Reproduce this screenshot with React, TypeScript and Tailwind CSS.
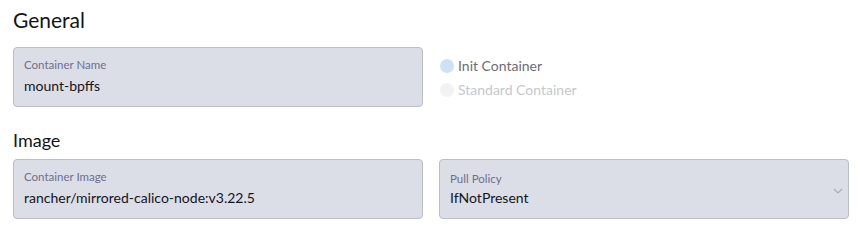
import React from "react";

const Field = ({ label, value, select }: { label: string; value: string; select?: boolean }) => (
  <div className={`relative h-[60px] rounded-[4px] border border-[#babdcc] bg-[#dcdee7] px-[10px] ${select ? "pt-[12px]" : "pt-[10px]"}`}>
    <div className="text-[11.5px] leading-[14px] text-[#6c6f8f]">{label}</div>
    <div className={`${select ? "mt-[3px]" : "mt-[5px]"} text-[14px] leading-[18px] text-[#141419]`}>{value}</div>
    {select && (
      <svg className="absolute right-[5px] top-[28px] h-[6px] w-[10px]" viewBox="0 0 10 6" fill="none" stroke="#a9abbd" strokeWidth="1.2">
        <path d="M1 1l4 4 4-4" />
      </svg>
    )}
  </div>
);

export default function App() {
  return (
    <div className="h-[237px] w-[858px] bg-white pl-[13px] pr-[9px]" style={{ fontFamily: "Lato, 'Open Sans', sans-serif" }}>
      <h3 className="pt-[7px] text-[21px] leading-[26px] text-[#141419]">General</h3>
      <div className="mt-[14px] grid grid-cols-2 gap-[16px]">
        <Field label="Container Name" value="mount-bpffs" />
        <div className="flex flex-col gap-[7px] pt-[10px] text-[14px] leading-[17px]">
          <div className="flex items-center gap-[4px] pl-[1px]">
            <span className="h-[14px] w-[14px] rounded-full bg-[#cde3f3]" />
            <span className="text-[#6b6c78]">Init Container</span>
          </div>
          <div className="flex items-center gap-[4px] pl-[1px]">
            <span className="h-[14px] w-[14px] rounded-full bg-[#f1f2f4]" />
            <span className="text-[#c6c7ce]">Standard Container</span>
          </div>
        </div>
      </div>
      <h4 className="mt-[22px] text-[18px] leading-[22px] text-[#141419]">Image</h4>
      <div className="mt-[8px] grid grid-cols-2 gap-[16px]">
        <Field label="Container Image" value="rancher/mirrored-calico-node:v3.22.5" />
        <Field label="Pull Policy" value="IfNotPresent" select />
      </div>
    </div>
  );
}
